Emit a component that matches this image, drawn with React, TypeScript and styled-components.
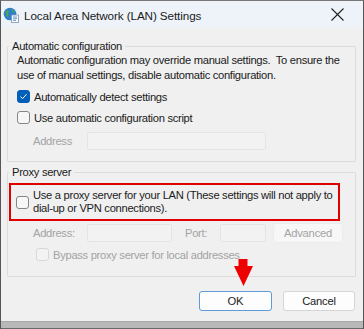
import styled, { createGlobalStyle } from 'styled-components';
import { FC } from 'react';

const GlobalStyle = createGlobalStyle`
  html, body {
    margin: 0;
    padding: 0;
    background: #f0f0f0;
  }
  body {
    font-family: 'Segoe UI', 'Liberation Sans', Arial, sans-serif;
    font-size: 11.2px;
    letter-spacing: -0.3px;
    color: #1a1a1a;
  }
`;

const Window = styled.div`
  position: relative;
  width: 364px;
  height: 329px;
  box-sizing: border-box;
  border-left: 1px solid #555;
  border-right: 1px solid #555;
  border-top: 1px solid #777;
  background: #f0f0f0;
  display: flex;
  flex-direction: column;
  overflow: hidden;
  white-space: nowrap;
`;

const TitleBar = styled.div`
  height: 27px;
  flex-shrink: 0;
  background: #eef3f9;
  display: flex;
  align-items: center;
  padding: 0 0 0 2px;
  gap: 5px;
  font-size: 11.7px;
  letter-spacing: -0.1px;
  color: #1b1b1b;
`;

const TitleText = styled.span`
  flex: 1;
  padding-top: 1px;
`;

const CloseButton = styled.div`
  width: 52px;
  height: 27px;
  display: flex;
  align-items: center;
  justify-content: center;
`;

const Content = styled.div`
  padding: 11px 7px 0 6px;
  display: flex;
  flex-direction: column;
  gap: 3px;
`;

const Group = styled.fieldset<{ $height: number }>`
  margin: 0;
  min-inline-size: 0;
  height: ${({ $height }) => $height}px;
  box-sizing: border-box;
  padding: 0 0 0 9px;
  border: 1px solid #dcdcdc;
  border-radius: 1px;
  display: flex;
  flex-direction: column;
`;

const Legend = styled.legend`
  padding: 0 3px;
  margin-left: -8px;
  color: #1b1b1b;
  line-height: 14px;
`;

const Note = styled.p`
  margin: 0;
  line-height: 15px;
`;

const Row = styled.div<{ $indent?: number; $muted?: boolean; $top?: number }>`
  display: flex;
  align-items: center;
  gap: 4px;
  margin-left: ${({ $indent }) => $indent ?? 0}px;
  margin-top: ${({ $top }) => $top ?? 0}px;
  height: 21px;
  color: ${({ $muted }) => ($muted ? '#a3a3a3' : '#1b1b1b')};
`;

const Box = styled.span<{ $checked?: boolean; $disabled?: boolean }>`
  width: 13px;
  height: 13px;
  box-sizing: border-box;
  border-radius: 3px;
  flex-shrink: 0;
  display: inline-flex;
  align-items: center;
  justify-content: center;
  background: ${({ $checked, $disabled }) => ($checked ? '#005fb8' : $disabled ? '#f3f3f3' : '#f7f7f7')};
  border: 1px solid ${({ $checked, $disabled }) => ($checked ? '#005fb8' : $disabled ? '#d8d8d8' : '#868686')};
`;

const FieldRow = styled.div<{ $top?: number }>`
  display: flex;
  align-items: center;
  margin-top: ${({ $top }) => $top ?? 0}px;
  height: 21px;
  color: #a3a3a3;
`;

const FieldLabel = styled.span<{ $width: number; $pad: number }>`
  width: ${({ $width }) => $width}px;
  padding-left: ${({ $pad }) => $pad}px;
  box-sizing: border-box;
  flex-shrink: 0;
`;

const Input = styled.span<{ $width: number }>`
  width: ${({ $width }) => $width}px;
  height: 18px;
  box-sizing: border-box;
  border: 1px solid #e4e4e4;
  border-radius: 2px;
  background: #f2f2f2;
  flex-shrink: 0;
`;

const Highlight = styled.div`
  margin: 4px 15px 0 -8px;
  height: 38px;
  box-sizing: border-box;
  padding: 0 0 0 5px;
  border: 2px solid #e00000;
  display: flex;
  align-items: center;
  gap: 4px;
  line-height: 13px;
  color: #1b1b1b;
`;

const Button = styled.button<{ $primary?: boolean; $disabled?: boolean; $width: number }>`
  font-family: inherit;
  font-size: 11.2px;
  letter-spacing: -0.2px;
  width: ${({ $width }) => $width}px;
  height: 20px;
  box-sizing: border-box;
  border-radius: 3px;
  padding: 0;
  background: ${({ $disabled }) => ($disabled ? '#f7f7f7' : '#fdfdfd')};
  border: 1px solid ${({ $primary, $disabled }) => ($primary ? '#5a9bd8' : $disabled ? '#ececec' : '#d5d5d5')};
  color: ${({ $disabled }) => ($disabled ? '#a3a3a3' : '#1b1b1b')};
`;

const Footer = styled.div`
  display: flex;
  justify-content: flex-end;
  gap: 11px;
  padding: 14px 8px 0 0;
`;

const Spacer = styled.div`
  flex: 1;
`;

const BottomEdge = styled.div`
  height: 6px;
  flex-shrink: 0;
  border-top: 1px solid #a8a8a8;
  background: #b8b8b8;
  border-bottom: 1px solid #6a6a6a;
`;

const Arrow = styled.svg`
  position: absolute;
  left: 233px;
  top: 258px;
`;

const Check: FC = () => (
  <svg width="9" height="9" viewBox="0 0 9 9">
    <path d="M1.5 4.6 L3.6 6.6 L7.6 2.2" stroke="#fff" strokeWidth="1" fill="none" />
  </svg>
);

const CheckBox: FC<{ checked?: boolean; disabled?: boolean }> = ({ checked, disabled }) => (
  <Box $checked={checked} $disabled={disabled}>
    {checked && <Check />}
  </Box>
);

const NetIcon: FC = () => (
  <svg width="16" height="16" viewBox="0 0 16 16">
    <circle cx="7" cy="7" r="6.3" fill="#2f7fd0" />
    <path d="M3 3.5 C5 2.5 6.5 4 5.5 5.5 C4.5 7 6 8 5 10 C3.5 9.5 2 7 3 3.5 Z" fill="#49a64a" />
    <path d="M8 2 C10 2.5 12 4 11.5 6 C10 5.5 9 4 8 2 Z" fill="#49a64a" />
    <rect x="8.5" y="8" width="7" height="7.5" fill="#fff" stroke="#7a8fa8" strokeWidth="0.8" />
    <path d="M10 10 H14 M10 11.7 H14 M10 13.4 H13" stroke="#3a78c0" strokeWidth="0.8" />
  </svg>
);

export default function App() {
  return (
    <>
      <GlobalStyle />
      <Window>
        <TitleBar>
          <NetIcon />
          <TitleText>Local Area Network (LAN) Settings</TitleText>
          <CloseButton>
            <svg width="13" height="13" viewBox="0 0 13 13">
              <path d="M0.5 0.5 L12.5 12.5 M12.5 0.5 L0.5 12.5" stroke="#222" strokeWidth="1.1" />
            </svg>
          </CloseButton>
        </TitleBar>
        <Content>
          <Group $height={123}>
            <Legend>Automatic configuration</Legend>
            <Note>
              Automatic configuration may override manual settings.&nbsp; To ensure the
              <br />
              use of manual settings, disable automatic configuration.
            </Note>
            <Row $top={3}>
              <CheckBox checked />
              <span>Automatically detect settings</span>
            </Row>
            <Row>
              <CheckBox />
              <span>Use automatic configuration script</span>
            </Row>
            <FieldRow $top={2}>
              <FieldLabel $width={70} $pad={16}>Address</FieldLabel>
              <Input $width={179} />
            </FieldRow>
          </Group>
          <Group $height={112}>
            <Legend>Proxy server</Legend>
            <Highlight>
              <CheckBox />
              <span>
                Use a proxy server for your LAN (These settings will not apply to
                <br />
                dial-up or VPN connections).
              </span>
            </Highlight>
            <FieldRow $top={1}>
              <FieldLabel $width={70} $pad={16}>Address:</FieldLabel>
              <Input $width={85} />
              <FieldLabel $width={48} $pad={13}>Port:</FieldLabel>
              <Input $width={46} />
              <Button $disabled $width={70} style={{ marginLeft: 7 }}>Advanced</Button>
            </FieldRow>
            <Row $indent={19} $muted $top={1}>
              <CheckBox disabled />
              <span>Bypass proxy server for local addresses</span>
            </Row>
          </Group>
        </Content>
        <Footer>
          <Button $primary $width={73}>OK</Button>
          <Button $width={72}>Cancel</Button>
        </Footer>
        <Spacer />
        <BottomEdge />
        <Arrow width="19" height="27" viewBox="0 0 19 27">
          <rect x="4.5" y="0" width="9" height="8" fill="#ee0000" />
          <path d="M0 7 H19 L9.5 27 Z" fill="#ee0000" />
        </Arrow>
      </Window>
    </>
  );
}
